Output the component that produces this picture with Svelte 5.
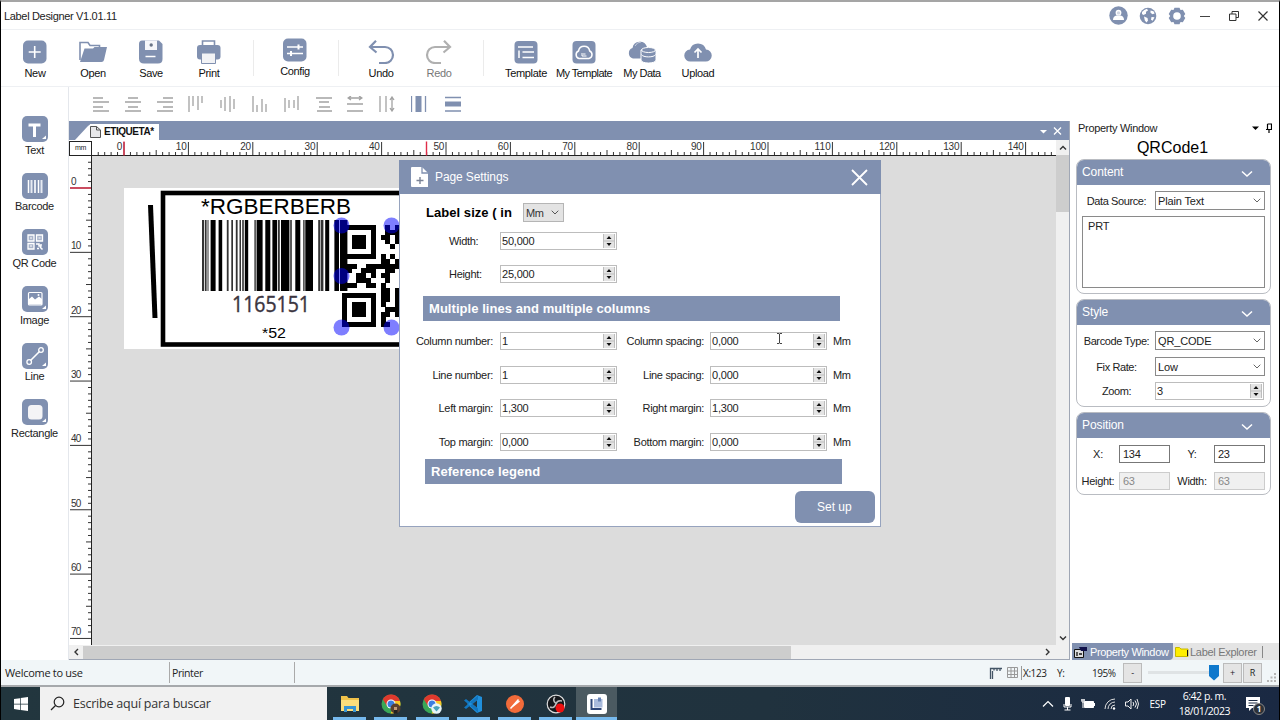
<script lang="ts">
	// Label designer main window with the page settings dialog open.
	type Tool = { id: string; label: string; dim?: boolean };

	const toolGroups: Tool[][] = [
		[
			{ id: 'new', label: 'New' },
			{ id: 'open', label: 'Open' },
			{ id: 'save', label: 'Save' },
			{ id: 'print', label: 'Print' }
		],
		[{ id: 'config', label: 'Config' }],
		[
			{ id: 'undo', label: 'Undo' },
			{ id: 'redo', label: 'Redo', dim: true }
		],
		[
			{ id: 'template', label: 'Template' },
			{ id: 'mytemplate', label: 'My Template' },
			{ id: 'mydata', label: 'My Data' },
			{ id: 'upload', label: 'Upload' }
		]
	];

	const objects = ['Text', 'Barcode', 'QR Code', 'Image', 'Line', 'Rectangle'];

	// 16x16 stroke paths of the alignment bar
	const aligns = [
		'M0 2h10M0 6h16M0 11h10M0 15h16',
		'M3 2h10M0 6h16M3 11h10M0 15h16',
		'M6 2h10M0 6h16M6 11h10M0 15h16',
		'M1 0v16M5 0v10M10 0v14M14 0v7',
		'M1 4v8M5 1v14M10 0v16M14 3v10',
		'M1 0v16M5 9v7M10 3v13M14 8v8',
		'M1 2v14M5 4v8M10 4v8M14 0v14',
		'M0 2h16M3 6h10M3 11h11M1 15h15',
		'M2 2h12M4 0l-3 2 3 2M12 0l3 2-3 2M0 8h16M0 15h16',
		'M1 0v16M7 0v16M13 2v12M11 4l2-3 2 3M11 12l2 3 2-3'
	];

	const MM = 6.44;
	const hTicks = Array.from({ length: 150 }, (_, i) => i - 4);
	const vTicks = Array.from({ length: 75 }, (_, i) => i - 4);

	// [x, width] of each bar, relative to the sheet
	const bars = [
		[78, 2], [80.8, 1.8], [83.5, 1], [86.6, 5], [94.6, 3.6], [102.8, 1.8], [107.3, 1.7],
		[111.8, 1.8], [115.5, 1.5], [118.2, 1.6], [120.8, 3.4], [130.4, 1.4], [132.6, 6], [141.3, 5],
		[148.4, 4.6], [153.8, 2], [157, 8.4], [166.2, 1.6], [171.3, 5], [179.2, 1.4], [181.3, 7.7],
		[194.2, 2.2], [197, 2.4], [201.2, 4], [210.4, 4.6], [216, 7.4]
	];

	const qr = [
		'1111111..1.1.11111111',
		'1.....1..111.1.....1.',
		'1.111.1.11.1.1.111.1.',
		'1.111.1..1.1.1.111.1.',
		'1.111.1...1..1.111.1.',
		'1.....1......1.....1.',
		'1111111.1.1.111111111',
		'........11.1.........',
		'111..1111111.11.1.11.',
		'.1..111..11..11.1..1.',
		'...11.1.11...1..11..1',
		'1..111...1..1..1.1..1',
		'.11..11.1...11.1..11.',
		'........11.11.1..1.1.',
		'1111111.11.1..1.11..1',
		'1.....1.11.11.1.1..1.',
		'1.111.1.1..1..11..1.1',
		'1.111.1..111.1.1.11..',
		'1.111.1.11.11.1..1.1.',
		'1.....1.1...1..1.11..',
		'1111111.11..1.1..1.1.'
	];

	const rows = [
		['Column number:', '1', 'Column spacing:', '0,000'],
		['Line number:', '1', 'Line spacing:', '0,000'],
		['Left margin:', '1,300', 'Right margin:', '1,300'],
		['Top margin:', '0,000', 'Bottom margin:', '0,000']
	];

	const apps = ['files', 'chrome1', 'chrome2', 'code', 'postman', 'obs', 'label'];
</script>

{#snippet toolIcon(id: string)}
	<svg class="ticon" viewBox="0 0 28 24" fill="none">
		{#if id === 'new'}
			<rect x="2" y="0.5" width="23.5" height="23" rx="5" fill="#8090b0" />
			<path d="M13.7 6v12M7.7 12h12" stroke="#fff" stroke-width="1.6" />
		{:else if id === 'open'}
			<path d="M1 20V2.5h8l2 3h9.5v3.5" stroke="#8090b0" stroke-width="1.6" />
			<path d="M1 22L5.5 8.5H14l1.5-1.5H28L25 20q-.5 2-2.5 2z" fill="#8090b0" />
		{:else if id === 'save'}
			<path d="M5 .5h17l3.5 3.5v15q0 4.5-4.5 4.5H7q-5 0-5-5V4q0-3.5 3-3.5z" fill="#8090b0" />
			<path d="M8 .5h12v9.5H8z" fill="#f6f7fa" />
			<circle cx="14.2" cy="5" r="1.7" fill="#6a7588" />
			<path d="M8.5 16.5h10" stroke="#fff" stroke-width="1.5" />
		{:else if id === 'print'}
			<path d="M7.500 5V1h12v4" stroke="#8090b0" stroke-width="1.6" />
			<rect x="2" y="5" width="23.5" height="14.5" rx="3" fill="#8090b0" />
			<path d="M6.5 13h14v10.5h-14z" fill="#f1f2f5" stroke="#8090b0" />
		{:else if id === 'config'}
			<rect x="2" y=".5" width="23.5" height="23" rx="5" fill="#8090b0" />
			<path d="M6 9h16M6 15.5h16" stroke="#fff" stroke-width="1.4" />
			<path d="M17.5 6.5v5M10 13v5" stroke="#fff" stroke-width="2" />
		{:else if id === 'undo'}
			<path d="M9 .8L3 7l6.5 5.5M3.5 7H18a8 8 0 0 1 0 16H12" stroke="#8090b0" stroke-width="2.2" />
		{:else if id === 'redo'}
			<path d="M19 .8L25 7l-6.5 5.5M24.5 7H10a8 8 0 0 0 0 16h6" stroke="#b0b0b0" stroke-width="2.2" />
		{:else if id === 'template'}
			<rect x="2.5" y="1" width="23" height="22.5" rx="4" fill="#8090b0" />
			<path d="M6 7h15M10.5 12h11.5M10.5 17.5h11.5M7 10.5v7.5" stroke="#fff" stroke-width="1.5" />
		{:else if id === 'mytemplate'}
			<rect x="2.5" y="1" width="23" height="22.5" rx="4" fill="#8090b0" />
			<path
				d="M9 18.5a4 4 0 0 1-.5-7.5 5.700 5.700 0 0 1 11.200 0 4 4 0 0 1-.7 7.5z"
				stroke="#fff"
				stroke-width="1.5"
			/>
			<path d="M12 13v3h4.5M13 14h2.5" stroke="#fff" />
		{:else if id === 'mydata'}
			<path d="M5 18.5a5.500 5.500 0 0 1-.5-10.500 7.500 7.500 0 0 1 14.500-1 5.500 5.500 0 0 1 1 11.500z" fill="#8090b0" />
			<path d="M7 6q2-4 6-4" stroke="#c6cedd" />
			<path d="M13 10v10c0 4 15 4 15 0V10z" fill="#8090b0" stroke="#fff" />
			<ellipse cx="20.5" cy="10" rx="7" ry="2.5" fill="#8090b0" stroke="#fff" />
			<path d="M13.500 14.500c1 3.200 13 3.200 14 0" stroke="#fff" />
		{:else}
			<path d="M6.500 21.500a6 6 0 0 1-.5-12 8.300 8.300 0 0 1 16 0 6 6 0 0 1-.5 12z" fill="#8090b0" />
			<path d="M14 18V9.500M10.500 12.500L14 9l3.500 3.500" stroke="#fff" stroke-width="1.7" />
		{/if}
	</svg>
{/snippet}

{#snippet objectIcon(id: string)}
	<svg class="oicon" viewBox="0 0 26 26" fill="none">
		<rect width="26" height="26" rx="5" fill="#8090b0" />
		{#if id === 'Text'}
			<path d="M6.500 9h12M12.500 9v12" stroke="#fff" stroke-width="3" />
		{:else if id === 'Barcode'}
			<path d="M6.500 7v13M16.500 7v13" stroke="#fff" stroke-width="1.5" />
			<path d="M9.500 7v13M13 7v13M19.500 7v13" stroke="#e6eaf2" stroke-width="2" />
		{:else if id === 'QR Code'}
			<path d="M6 6h6v6H6zM14.500 6h6v6h-6zM6 14.500h6v5.500H6z" stroke="#fff" stroke-width="1.3" fill="#aab5cb" />
			<path d="M14 15h3v2h2v-2M15 19.500h2M18 18l2.500 2.500" stroke="#fff" stroke-width="1.5" />
			<path d="M8 9h2M16.500 9h2M8 17h2" stroke="#fff" />
		{:else if id === 'Image'}
			<rect x="6.5" y="6.5" width="13.5" height="12.5" rx="1" stroke="#fff" stroke-width="1.2" />
			<path d="M7 13l3-2.500 3 3 4-3 3 2.500v5.500H7z" fill="#fff" />
			<circle cx="16.5" cy="9" r="1" fill="#fff" />
		{:else if id === 'Line'}
			<path d="M8.500 17.500L17.500 8.500" stroke="#fff" stroke-width="1.6" />
			<circle cx="7.2" cy="19" r="2.3" stroke="#fff" stroke-width="1.3" />
			<circle cx="19" cy="7" r="2.3" stroke="#fff" stroke-width="1.3" />
		{:else}
			<rect x="6" y="6" width="14.5" height="14.5" rx="3.5" fill="#f4f4f6" />
		{/if}
		{#if id === 'Text' || id === 'Image' || id === 'Line' || id === 'Rectangle'}
			<path d="M24 19.500v3.500h-4z" fill="#fff" />
		{/if}
	</svg>
{/snippet}

{#snippet spin(value: string)}
	<span class="spin">
		<span class="val">{value}</span>
		<svg class="arrows" viewBox="0 0 12 14">
			<path d="M0 0h12v14H0z" fill="#e4e4e4" />
			<path d="M0 7h12M.5 0v14M11.500 0v14" stroke="#bdbdbd" />
			<path d="M3.500 5L6 2l2.500 3zM3.500 9h5L6 12z" fill="#111" />
		</svg>
	</span>
{/snippet}

{#snippet select(value: string)}
	<span class="select">
		{value}
		<svg width="8" height="5" viewBox="0 0 8 5"><path d="M.7.7L4 4 7.300.7" fill="none" stroke="#666" /></svg>
	</span>
{/snippet}

{#snippet groupHead(title: string)}
	<header>
		{title}
		<svg width="12" height="8" viewBox="0 0 12 8"><path d="M1 1.500l5 4.500 5-4.500" fill="none" stroke="#fff" stroke-width="1.5" /></svg>
	</header>
{/snippet}

<div class="window">
	<div class="titlebar">
		<span class="name">Label Designer V1.01.11</span>
		<svg width="19" height="19" viewBox="0 0 19 19">
			<circle cx="9.5" cy="9.5" r="9.2" fill="#8090b0" />
			<circle cx="9.5" cy="6.7" r="2.9" fill="#fff" />
			<path d="M4 14q0-4 3.500-4.500h4Q15 10 15 14z" fill="#fff" />
			<circle cx="9.5" cy="6.9" r="1.7" fill="#8090b0" opacity="0.35" />
		</svg>
		<svg width="18" height="18" viewBox="0 0 18 18">
			<circle cx="9" cy="9" r="8.3" fill="#8090b0" />
			<path d="M3 5q2-2.500 5-3.300l1 1.800-2 1.200v2L4.500 8 3 7zM11.500 3.500l3 .8 1.200 2.200-2.200.8-2-1.600zM5 9.500l3.500 1.500.5 2.500-1.500 2-1.700-2zM12.500 10l3 .3-1.800 3.500-1.700-1z" fill="#fff" />
		</svg>
		<svg width="18" height="18" viewBox="0 0 18 18">
			<path d="M6.500.8h5l1 2.200 2.300-.3 2.500 4.300L15.800 9l1.500 2-2.500 4.300-2.300-.3-1 2.200h-5l-1-2.200-2.300.3L.7 11l1.500-2L.7 7l2.500-4.300 2.300.3z" fill="#8090b0" />
			<circle cx="9" cy="9" r="3.8" fill="#fff" />
		</svg>
		<svg width="10" height="10" viewBox="0 0 10 10"><path d="M0 5.500h10" stroke="#444" /></svg>
		<svg width="10" height="10" viewBox="0 0 10 10"><path d="M.5 3h6.500v6.500H.5zM3 3V.5h6.500v6H7" fill="none" stroke="#333" /></svg>
		<svg width="10" height="10" viewBox="0 0 10 10"><path d="M.5.5l9 9M9.500.5l-9 9" stroke="#333" stroke-width="1.2" /></svg>
	</div>

	<div class="toolbar">
		{#each toolGroups as group, g}
			{#if g > 0}<i class="sep"></i>{/if}
			{#each group as tool}
				<div class="tool {tool.id}" class:dim={tool.dim}>
					{@render toolIcon(tool.id)}
					<span>{tool.label}</span>
				</div>
			{/each}
		{/each}
	</div>

	<div class="main">
		<nav class="objects">
			{#each objects as name}
				<div class="object">
					{@render objectIcon(name)}
					<span>{name}</span>
				</div>
			{/each}
		</nav>

		<div class="center">
			<div class="aligns">
				{#each aligns as d}
					<svg width="16" height="16" viewBox="0 0 16 16"><path {d} fill="none" stroke="#a2a2a2" stroke-width="1.3" /></svg>
				{/each}
				<svg width="16" height="16" viewBox="0 0 16 16">
					<path d="M.5 0v16M14.500 0v16" stroke="#8090b0" stroke-width="1.3" /><path d="M4.500 0h6v16h-6z" fill="#8090b0" />
				</svg>
				<svg class="last" width="16" height="16" viewBox="0 0 16 16">
					<path d="M0 1.500h16M0 15h16" stroke="#8090b0" stroke-width="1.3" /><path d="M0 5.500h16v5H0z" fill="#8090b0" />
				</svg>
			</div>

			<div class="doc">
				<div class="tabs">
					<svg width="21" height="16" viewBox="0 0 21 16"><path d="M0 16L13 2q2-2 4-2h4v16z" fill="#fff" /></svg>
					<div class="tab">
						<svg width="11" height="12" viewBox="0 0 11 12"><path d="M.5.5h6l4 3.500v7.500H.5z" fill="#e8e8ea" stroke="#555" /><path d="M6.500.5V4h4" fill="none" stroke="#555" /></svg>
						<b>ETIQUETA*</b>
					</div>
					<svg class="tabctl" width="22" height="10" viewBox="0 0 22 10">
						<path d="M0 4h7L3.500 7.500z" fill="#fff" />
						<path d="M14 1.500l7 7M21 1.500l-7 7" stroke="#fff" stroke-width="1.3" />
					</svg>
				</div>

				<div class="sheet">
					<div class="work">
						<div class="toprow">
							<div class="unit">mm</div>
							<svg class="ruler" width="964" height="16" viewBox="92 140 964 16">
								{#each hTicks as t}
									{@const x = 124 + t * MM}
									{@const h = t % 10 === 0 ? 13 : t % 5 === 0 ? 5 : 3}
									<path d="M{x} {155 - h}v{h}" stroke="#333" />
									{#if t % 10 === 0}
										<text {x} dx="-2" y="150" text-anchor="end" textLength={String(t).length * 5.3}>{t}</text>
									{/if}
								{/each}
								<path d="M92 155.500h964" stroke="#222" />
								<path d="M124 141.500v14M426.500 141.500v14" stroke="#e02c48" stroke-width="1.4" />
							</svg>
						</div>
						<div class="canvasrow">
							<svg class="ruler" width="23" height="489" viewBox="69 156 23 489">
								{#each vTicks as t}
									{@const y = 188 + t * 6.435}
									{@const w = t % 10 === 0 ? 21 : t % 5 === 0 ? 5 : 3}
									<path d="M{91 - w} {y}h{w}" stroke="#333" />
									{#if t % 10 === 0}
										<text x="71" y={y - 3} textLength={String(t).length * 5}>{t}</text>
									{/if}
								{/each}
								<path d="M91.500 156v489" stroke="#222" />
								<path d="M70 188h21" stroke="#e02c48" stroke-width="1.4" />
							</svg>
							<div class="canvas">
								<svg width="324" height="161" viewBox="0 0 324 161">
									<path d="M0 0h324v161H0z" fill="#fff" />
									<path d="M26.500 17L31 130" stroke="#000" stroke-width="5" />
									<rect x="39" y="5" width="276" height="151.5" fill="none" stroke="#000" stroke-width="4.6" />
									<text class="product" x="77" y="26" textLength="150" lengthAdjust="spacingAndGlyphs">*RGBERBERB</text>
									{#each bars as [x, w]}
										<rect {x} y="32" width={w} height="71" fill={w < 2.5 ? '#333' : '#000'} />
									{/each}
									<text class="code" x="108" y="124" textLength="78" lengthAdjust="spacingAndGlyphs">1165151</text>
									<text class="price" x="138" y="150" textLength="24" lengthAdjust="spacingAndGlyphs">*52</text>
									<g transform="translate(218 37)" shape-rendering="crispEdges">
										{#each qr as line, r}
											{#each line as m, c}
												{#if m === '1'}
													<rect x={c * 4.83} y={r * 4.83} width="4.9" height="4.9" />
												{/if}
											{/each}
										{/each}
									</g>
									<g fill="#0000ff" opacity="0.5">
										<circle cx="217.5" cy="37.5" r="8" />
										<circle cx="267.5" cy="37.5" r="8" />
										<circle cx="217.5" cy="88" r="8" />
										<circle cx="217.5" cy="139.5" r="8" />
										<circle cx="267.5" cy="139.5" r="8" />
									</g>
								</svg>
							</div>
						</div>
					</div>
					<div class="vscroll">
						<svg width="8" height="14" viewBox="0 0 8 14"><path d="M1 9.500l3-3 3 3" fill="none" stroke="#333" stroke-width="1.4" /></svg>
						<div class="vthumb"></div>
						<svg width="8" height="14" viewBox="0 0 8 14"><path d="M1 5.500l3 3 3-3" fill="none" stroke="#333" stroke-width="1.4" /></svg>
					</div>
				</div>
				<div class="hscroll">
					<svg width="14" height="8" viewBox="0 0 14 8"><path d="M9 1L6 4l3 3" fill="none" stroke="#333" stroke-width="1.4" /></svg>
					<div class="hthumb"></div>
					<svg width="14" height="8" viewBox="0 0 14 8"><path d="M5 1l3 3-3 3" fill="none" stroke="#333" stroke-width="1.4" /></svg>
				</div>
			</div>
		</div>

		<aside class="props">
			<div class="phead">
				<span>Property Window</span>
				<svg width="20" height="10" viewBox="0 0 20 10">
					<path d="M0 3.500h7L3.500 7z" fill="#000" />
					<path d="M15.500 1h4v5M15.500 1v5M14 6.500h6M17 6.500V10" fill="none" stroke="#000" stroke-width="1.2" />
				</svg>
			</div>
			<h1>QRCode1</h1>
			<section class="content">
				{@render groupHead('Content')}
				<div class="prow"><span class="lbl">Data Source:</span>{@render select('Plain Text')}</div>
				<div class="area">PRT</div>
			</section>
			<section class="style">
				{@render groupHead('Style')}
				<div class="prow"><span class="lbl">Barcode Type:</span>{@render select('QR_CODE')}</div>
				<div class="prow"><span class="lbl">Fix Rate:</span>{@render select('Low')}</div>
				<div class="prow zoom"><span class="lbl">Zoom:</span>{@render spin('3')}</div>
			</section>
			<section class="position">
				{@render groupHead('Position')}
				<div class="pos">
					<span>X:</span><span class="box">134</span><span>Y:</span><span class="box">23</span>
					<span>Height:</span><span class="box off">63</span><span>Width:</span><span class="box off">63</span>
				</div>
			</section>
			<div class="ptabs">
				<div class="ptab on">
					<svg width="13" height="12" viewBox="0 0 13 12"><path d="M.5 3.500h9v8h-9z" fill="#ddd" stroke="#111" /><path d="M5 1h8v4H7z" fill="#10104a" /><path d="M3 6v4M5 8h3" stroke="#111" stroke-width="1.3" /></svg>
					<span>Property Window</span>
				</div>
				<div class="ptab">
					<svg width="14" height="10" viewBox="0 0 14 10"><path d="M.5 2V.5h4L6 2h7v7.500H.5z" fill="#ffee00" stroke="#c8b800" /><path d="M12.500 3v6" stroke="#111" /></svg>
					<span>Label Explorer</span>
				</div>
			</div>
		</aside>
	</div>

	<div class="status">
		<span class="cell welcome">Welcome to use</span>
		<span class="cell printer">Printer</span>
		<svg width="13" height="12" viewBox="0 0 13 12"><path d="M1.500 12V1.500H13M3.500 4v8M5 3.500V1M8 4V1M11 4V1" fill="none" stroke="#456" stroke-width="1.3" /></svg>
		<svg class="grid" width="12" height="12" viewBox="0 0 12 12"><path d="M.5.5h10v10H.5zM4 .5v10M7.500.5v10M.5 4h10M.5 7.500h10" fill="none" stroke="#999" /></svg>
		<span class="xy">X:123</span>
		<span class="yy">Y:</span>
		<span class="pct">195%</span>
		<span class="btn">-</span>
		<div class="slider"><i></i><svg width="10" height="16" viewBox="0 0 10 16"><path d="M0 0h10v11l-5 4.500L0 11z" fill="#0f78cc" /></svg></div>
		<span class="btn">+</span>
		<span class="btn">R</span>
		<svg class="grip" width="9" height="9" viewBox="0 0 9 9"><path d="M7 0h2v2H7zM3.500 3.500h2v2h-2zM7 3.500h2v2H7zM0 7h2v2H0zM3.500 7h2v2h-2zM7 7h2v2H7z" fill="#b5b5b5" /></svg>
	</div>

	<div class="taskbar">
		<div class="start">
			<svg width="14" height="14" viewBox="0 0 14 14"><path d="M0 2l6-.8v5.500H0zM6.700 1.100L14 0v6.700H6.700zM0 7.400h6v5.500L0 12zM6.700 7.400H14V14l-7.300-1z" fill="#fff" /></svg>
		</div>
		<div class="search">
			<svg width="15" height="15" viewBox="0 0 15 15"><circle cx="9" cy="6" r="4.8" fill="none" stroke="#222" stroke-width="1.2" /><path d="M5.500 9.500L1 14" stroke="#222" stroke-width="1.3" /></svg>
			Escribe aquí para buscar
		</div>
		{#each apps as app}
			<div class="app" class:active={app === 'label'}>
				<svg width="20" height="20" viewBox="0 0 20 20">
					{#if app === 'files'}
						<path d="M1 2h6l1.500 2H19v13H1z" fill="#f0c24a" />
						<path d="M1 6h18v11H1z" fill="#ffdf7c" />
						<path d="M4 18v-6h12v6h-3v-3H7v3z" fill="#3b96d4" />
					{:else if app === 'chrome1' || app === 'chrome2'}
						<circle cx="10" cy="10" r="9.5" fill="#3aa757" />
						<path d="M1.800 5.300A9.500 9.500 0 0 1 19 7H10L6 12z" fill="#e0392d" />
						<path d="M19 7a9.500 9.500 0 0 1-9.500 12.500L14 11l-1-4z" fill="#f9c825" />
						<circle cx="10" cy="10" r="4.5" fill="#fff" />
						<circle cx="10" cy="10" r="3.5" fill="#3c7de0" />
						{#if app === 'chrome1'}
							<circle cx="14.5" cy="14.5" r="5" fill="#5b4030" />
							<path d="M13 13h3v6h-3z" fill="#c69a74" /><path d="M13 16h3.500v3.500H13z" fill="#222" />
						{:else}
							<circle cx="14.5" cy="14.5" r="5.2" fill="#e6f3f7" />
							<path d="M11 13.500q3.500-3 7 0l-3.500 4z" fill="#48a3bb" />
						{/if}
					{:else if app === 'code'}
						<path d="M14 1l5 2v14l-5 2L4 10z" fill="#2090dc" />
						<path d="M1 6.500L3 5l12 9.500v4zM1 13.500L3 15 15 5.500v-4z" fill="#1276bf" />
						<path d="M14 6.500v7L9.500 10z" fill="#22343f" />
					{:else if app === 'postman'}
						<circle cx="10" cy="10" r="9" fill="#f26b3a" />
						<path d="M5.500 14.500l8-9M7 13l7.500-6" stroke="#fff" stroke-width="1.5" />
					{:else if app === 'obs'}
						<circle cx="10" cy="10" r="8.8" fill="#15181c" stroke="#ddd" stroke-width="1.2" />
						<path d="M9 3q-3 3 1 6.500M4 13q4 2 6-3M16 7q-5-1-6 3" stroke="#bbb" stroke-width="1.6" fill="none" />
						<circle cx="14" cy="14" r="4.5" fill="#ee1010" />
					{:else}
						<rect width="20" height="20" rx="3" fill="#fff" />
						<path d="M4.500 5v10h10" stroke="#2d4678" stroke-width="2" fill="none" />
						<path d="M7 5h8.500v8.500H7z" fill="#a9bbdc" /><path d="M11 3.500h3v4h-3z" fill="#6682b4" />
					{/if}
				</svg>
			</div>
		{/each}
		<div class="tray">
			<svg width="12" height="7" viewBox="0 0 12 7"><path d="M1 6.500l5-5 5 5" fill="none" stroke="#fff" stroke-width="1.2" /></svg>
			<svg width="9" height="14" viewBox="0 0 9 14"><rect x="2" width="5" height="9" rx="1" fill="#fff" /><path d="M1 7v3h7V7M4.500 10v3M1.500 13h6" fill="none" stroke="#fff" /></svg>
			<svg width="14" height="10" viewBox="0 0 14 10"><path d="M3.500 2.500h9v6h-9z" fill="#fff" stroke="#fff" /><path d="M13.500 4v3M0 1h4M1 0v3h2V0M2 3v6" stroke="#fff" fill="none" /></svg>
			<svg width="12" height="12" viewBox="0 0 12 12"><path d="M1 11A10 10 0 0 1 11 1M4 11a7 7 0 0 1 7-7M7 11a4 4 0 0 1 4-4" fill="none" stroke="#ddd" /><circle cx="10" cy="10.5" r="1.2" fill="#fff" /></svg>
			<svg width="14" height="12" viewBox="0 0 14 12"><path d="M.5 4h2.500l3-3v10L3 8H.5zM8 4q1.500 2 0 4M10 2.500q3 3.500 0 7M12 1q3 5 0 10" fill="none" stroke="#eee" /></svg>
			<span class="lang">ESP</span>
			<span class="clock">6:42 p. m.<br />18/01/2023</span>
			<div class="notes">
				<svg width="14" height="14" viewBox="0 0 14 14"><path d="M0 0h14v11H6l-3 3v-3H0z" fill="#fff" /><path d="M2.500 3.500h9M2.500 6h9M2.500 8.500h5" stroke="#1c2c44" /></svg>
				<b>1</b>
			</div>
		</div>
	</div>

	<div class="dialog">
		<div class="dhead">
			<svg width="17" height="20" viewBox="0 0 17 20"><path d="M1 0h10l6 6v14H1q-1 0-1-1V1q0-1 1-1z" fill="#fff" /><path d="M11 0v6h6" fill="none" stroke="#8090b0" stroke-width="1.3" /><path d="M9 10v7M5.500 13.500h7" stroke="#7b8396" stroke-width="1.4" /></svg>
			<span>Page Settings</span>
			<svg width="17" height="17" viewBox="0 0 17 17"><path d="M1 1l15 15M16 1L1 16" stroke="#fff" stroke-width="1.8" /></svg>
		</div>
		<div class="size">
			<b>Label size ( in</b>
			<span class="unitsel">Mm <svg width="8" height="5" viewBox="0 0 8 5"><path d="M.7.7L4 4 7.300.7" fill="none" stroke="#555" /></svg></span>
		</div>
		<div class="drow first"><span class="dl wide">Width:</span>{@render spin('50,000')}</div>
		<div class="drow second"><span class="dl wide">Height:</span>{@render spin('25,000')}</div>
		<h2>Multiple lines and multiple columns</h2>
		<div class="rows">
			{#each rows as [l, lv, r, rv]}
				<div class="drow">
					<span class="dl">{l}</span>{@render spin(lv)}
					<span class="dl right">{r}</span>{@render spin(rv)}
					<span class="mm">Mm</span>
				</div>
			{/each}
		</div>
		<h2 class="legend">Reference legend</h2>
		<div class="setup">Set up</div>
	</div>

	<svg class="caret" width="7" height="11" viewBox="0 0 7 11"><path d="M1 .5h2l.5.5.5-.5h2M3.500 1v9M1 10.500h2l.5-.5.5.5h2" fill="none" stroke="#444" /></svg>
</div>

<style>
	:global(body) {
		margin: 0;
		overflow: hidden;
	}
	.window {
		--blue: #8090b0;
		position: relative;
		box-sizing: border-box;
		width: 1280px;
		height: 720px;
		display: flex;
		flex-direction: column;
		border: solid #000;
		border-width: 0 1px;
		border-top: 2px solid #a5a5a5;
		background: #fff;
		color: #222;
		font: 11px/14px 'Liberation Sans', Arial, sans-serif;
		letter-spacing: -0.3px;
		white-space: nowrap;
	}
	.window :global(*) {
		box-sizing: border-box;
	}
	svg {
		display: block;
		flex: none;
	}

	.titlebar {
		height: 28px;
		display: flex;
		align-items: center;
		padding: 0 11px 0 3px;
		border-bottom: 1px solid #eef0f3;
		gap: 19px;
	}
	.titlebar svg:nth-of-type(1),
	.titlebar svg:nth-of-type(2) {
		margin-right: -8px;
	}
	.titlebar svg:nth-of-type(3) {
		margin-right: -5px;
	}
	.titlebar .name {
		margin-right: auto;
		letter-spacing: -0.33px;
	}

	.toolbar {
		height: 57px;
		display: flex;
		align-items: flex-start;
		padding: 10px 0 0 5px;
		border-bottom: 1px solid #eef0f3;
	}
	.tool {
		width: 58px;
		display: flex;
		flex-direction: column;
		align-items: center;
		gap: 2px;
		letter-spacing: -0.35px;
		color: #111;
	}
	.tool.config {
		width: 56px;
		margin-top: -2px;
	}
	.tool.mytemplate {
		letter-spacing: -0.55px;
	}
	.tool.mydata {
		letter-spacing: -0.5px;
	}
	.tool.upload {
		width: 54px;
	}
	.tool.dim {
		color: #777;
	}
	.ticon {
		width: 28px;
		height: 24px;
	}
	.sep {
		width: 1px;
		height: 36px;
		margin: 0 13px 0 15px;
		background: #ebebeb;
	}

	.main {
		flex: 1;
		display: flex;
		min-height: 0;
	}
	.objects {
		width: 67px;
		padding-top: 29px;
	}
	.object {
		height: 56.7px;
		display: flex;
		flex-direction: column;
		align-items: center;
		gap: 0.6px;
	}
	.oicon {
		width: 26px;
		height: 26px;
		margin-left: 1px;
	}
	.center {
		width: 1002px;
		display: flex;
		flex-direction: column;
		border-left: 1px solid #e4e7ec;
	}
	.aligns {
		height: 34px;
		display: flex;
		align-items: center;
		gap: 15.8px;
		padding-left: 24px;
	}
	.aligns .last {
		margin-left: 2.5px;
	}
	.doc {
		flex: 1;
		display: flex;
		flex-direction: column;
		border: solid #a0a7b5;
		border-width: 0 1px 1px 0;
	}
	.tabs {
		height: 19px;
		display: flex;
		align-items: flex-end;
		padding: 0 7px 0 6px;
		background: var(--blue);
	}
	.tab {
		height: 16px;
		width: 69px;
		display: flex;
		align-items: center;
		gap: 3px;
		margin-left: -6px;
		background: #fff;
		color: #111;
		font-size: 10px;
		letter-spacing: -0.45px;
	}
	.tabctl {
		margin: 0 0 4px auto;
	}
	.sheet {
		flex: 1;
		display: flex;
		min-height: 0;
	}
	.work {
		width: 987px;
	}
	.toprow,
	.canvasrow {
		display: flex;
	}
	.unit {
		width: 23px;
		height: 15px;
		margin-top: 1px;
		border: 1px solid #222;
		font-size: 7px;
		line-height: 12px;
		text-align: center;
	}
	.ruler text {
		font-size: 10px;
		fill: #333;
	}
	.canvas {
		flex: 1;
		height: 489px;
		padding: 32px 0 0 32px;
		background: #dcdcdc;
	}
	.product,
	.price {
		fill: #000;
		font-size: 21.5px;
		letter-spacing: 0;
	}
	.price {
		font-size: 15px;
	}
	.code {
		fill: #3b3540;
		stroke: #3b3540;
		stroke-width: 0.4px;
		font: 21px 'Open Sans', sans-serif;
		letter-spacing: 0;
	}
	.vscroll {
		width: 14px;
		display: flex;
		flex-direction: column;
		align-items: center;
		background: #f0f0f0;
	}
	.vthumb {
		width: 13px;
		height: 57px;
		margin: 1px 0 auto;
		background: #cdcdcd;
	}
	.hscroll {
		height: 14px;
		display: flex;
		align-items: center;
		padding-right: 14px;
		background: #f0f0f0;
	}
	.hthumb {
		width: 708px;
		height: 13px;
		margin-right: auto;
		background: #cdcdcd;
	}

	.props {
		width: 209px;
		display: flex;
		flex-direction: column;
		padding: 34px 0 0 6px;
	}
	.phead {
		display: flex;
		justify-content: space-between;
		align-items: center;
		padding: 0 7px 0 2px;
	}
	h1 {
		margin: 4px 10px 2px 0;
		font: 16px/18px 'Liberation Sans', Arial, sans-serif;
		letter-spacing: 0;
		text-align: center;
		color: #000;
	}
	section {
		width: 195px;
		border: 1px solid #b9bcc2;
		border-radius: 8px;
		overflow: hidden;
		margin-bottom: 5px;
	}
	section.content {
		height: 135px;
	}
	section.style {
		height: 108px;
	}
	section.position {
		height: 83px;
	}
	header {
		height: 26px;
		display: flex;
		align-items: center;
		justify-content: space-between;
		margin: -1px -1px 0;
		padding: 0 18px 0 6px;
		background: var(--blue);
		color: #fff;
		font-size: 12px;
		letter-spacing: -0.1px;
	}
	header svg {
		margin-top: 4px;
	}
	.prow {
		display: flex;
		align-items: center;
		margin-top: 7px;
	}
	header + .prow {
		margin-top: 6px;
	}
	.prow.zoom {
		margin-top: 6px;
	}
	.prow .lbl {
		width: 78px;
		padding-left: 1px;
		text-align: center;
		letter-spacing: -0.4px;
	}
	.select {
		width: 110px;
		height: 19px;
		display: flex;
		align-items: center;
		justify-content: space-between;
		padding: 0 3px 0 2px;
		border: 1px solid #8a8a8a;
		letter-spacing: -0.15px;
	}
	.area {
		width: 183px;
		height: 72px;
		margin: 6px 0 0 5px;
		padding: 2px 5px;
		border: 1px solid #8a8a8a;
		letter-spacing: -0.2px;
	}
	.prow .spin {
		width: 109px;
	}
	.pos {
		display: grid;
		grid-template-columns: 42px 51px 44px 51px;
		row-gap: 9px;
		padding-top: 7px;
		align-items: center;
		text-align: center;
	}
	.box {
		height: 18px;
		padding-left: 3px;
		border: 1px solid #777;
		line-height: 17px;
		text-align: left;
	}
	.box.off {
		border-color: #ccc;
		background: #f0f0f0;
		color: #888;
	}
	.spin {
		width: 117px;
		height: 18px;
		display: inline-flex;
		align-items: center;
		justify-content: space-between;
		padding-left: 1px;
		border: 1px solid #bdbdbd;
		background: #fff;
		letter-spacing: -0.2px;
	}
	.arrows {
		width: 12px;
		height: 14px;
		margin-right: 1px;
	}
	.ptabs {
		display: flex;
		align-items: center;
		height: 17px;
		margin: auto 0 0 -4px;
		background: #e4e4e4;
	}
	.ptab {
		height: 17px;
		display: flex;
		align-items: center;
		gap: 3px;
		padding-left: 2px;
		color: #777;
		width: 90px;
		letter-spacing: -0.35px;
	}
	.ptab:last-child {
		height: 12px;
		gap: 1px;
		border-right: 1px solid #888;
		letter-spacing: -0.3px;
	}
	.ptab.on {
		width: 101px;
		border-radius: 0 0 4px 0;
		background: var(--blue);
		color: #fff;
	}

	.status {
		height: 27px;
		display: flex;
		align-items: center;
		border-bottom: 2px solid #a6a9ac;
		background: #f1f6f8;
		font-family: 'Open Sans', sans-serif;
	}
	.cell {
		height: 21px;
		padding-left: 2px;
		border-right: 1px solid #aaa;
		line-height: 22px;
	}
	.welcome {
		width: 169px;
		padding-left: 4px;
	}
	.printer {
		width: 125px;
		margin-right: 694px;
		font-size: 10.5px;
		letter-spacing: -0.4px;
	}
	.status .grid {
		margin-left: 5px;
	}
	.xy {
		margin-left: 2px;
		padding-left: 1px;
		border-left: 1px solid #999;
		width: 36px;
		font-size: 10px;
		letter-spacing: -0.4px;
	}
	.yy {
		width: 35px;
		font-size: 10px;
	}
	.pct {
		width: 31px;
		font-size: 10px;
		letter-spacing: -0.5px;
	}
	.btn {
		width: 19px;
		height: 20px;
		border: 1px solid #bbb;
		background: #e4e4e4;
		font-size: 9px;
		line-height: 18px;
		text-align: center;
	}
	.btn + .btn {
		margin-left: 1px;
	}
	.slider {
		width: 81px;
		display: flex;
		align-items: center;
		padding: 0 4px 0 6px;
	}
	.slider i {
		flex: 1;
		height: 3px;
		background: #dfe3e5;
	}
	.grip {
		margin: 10px 0 0 5px;
	}

	.taskbar {
		height: 33px;
		display: flex;
		background: linear-gradient(90deg, #22363e, #20323e 60%, #1a2943);
		color: #fff;
		font-family: 'Open Sans', sans-serif;
	}
	.start {
		width: 39px;
		display: flex;
		align-items: center;
		justify-content: center;
	}
	.search {
		width: 287px;
		display: flex;
		align-items: center;
		gap: 8px;
		padding-left: 10px;
		background: #f1f1f1;
		color: #333;
		font-size: 12.5px;
		letter-spacing: -0.22px;
	}
	.app {
		width: 33px;
		display: flex;
		align-items: center;
		justify-content: center;
		margin-left: 8.3px;
		border-bottom: 3px solid #76b9ed;
		padding-top: 3px;
	}
	.search + .app {
		margin-left: 6px;
	}
	.app.active {
		width: 41px;
		margin-left: 4px;
		background: #4b5a61;
	}
	.tray {
		margin-left: auto;
		display: flex;
		align-items: center;
		gap: 9px;
		padding-right: 19px;
		font-size: 10.5px;
	}
	.lang {
		margin-left: 2px;
		font-size: 10px;
	}
	.clock {
		margin-left: 4px;
		text-align: center;
		line-height: 15px;
		letter-spacing: -0.45px;
	}
	.notes {
		position: relative;
		margin-left: 7px;
	}
	.notes b {
		position: absolute;
		left: 7px;
		top: 6px;
		width: 12px;
		height: 12px;
		border: 1px solid #888;
		border-radius: 50%;
		background: #2c3138;
		font-size: 8px;
		line-height: 10px;
		text-align: center;
	}

	.dialog {
		position: absolute;
		left: 398px;
		top: 158px;
		width: 482px;
		height: 367px;
		border: 1px solid #96a3be;
		background: #fff;
	}
	.dhead {
		height: 34px;
		display: flex;
		align-items: center;
		gap: 7px;
		margin: -1px -1px 0;
		padding: 0 13px 0 12px;
		background: var(--blue);
		color: #fff;
		font-size: 12px;
		line-height: 16px;
		letter-spacing: -0.1px;
	}
	.dhead span {
		flex: 1;
	}
	.size {
		height: 19px;
		display: flex;
		align-items: center;
		gap: 10px;
		margin: 9px 0 0 26px;
		color: #000;
	}
	.size b {
		width: 87px;
		font-size: 13px;
		line-height: 13px;
		letter-spacing: 0.05px;
	}
	.unitsel {
		width: 41px;
		height: 19px;
		display: flex;
		align-items: center;
		justify-content: space-between;
		padding: 0 4px 0 2px;
		border: 1px solid #b5b5b5;
		background: #e3e3e3;
		color: #333;
	}
	.drow {
		height: 18px;
		display: flex;
		align-items: center;
	}
	.first {
		margin-top: 10px;
	}
	.second {
		margin-top: 15px;
	}
	.dl {
		width: 93px;
		margin-right: 7px;
		text-align: right;
	}
	.dl.wide {
		padding-left: 49px;
		text-align: left;
	}
	.dl.right {
		width: 87px;
		margin-right: 6px;
	}
	.mm {
		margin-left: 6px;
	}
	h2 {
		width: 417px;
		height: 25px;
		margin: 13px 0 0 23px;
		padding-left: 6px;
		background: var(--blue);
		color: #fff;
		font: bold 13px/25px 'Liberation Sans', Arial, sans-serif;
		letter-spacing: 0.05px;
	}
	.rows {
		height: 119px;
		display: flex;
		flex-direction: column;
		justify-content: space-between;
		margin-top: 11px;
	}
	h2.legend {
		margin: 8px 0 0 25px;
	}
	.setup {
		width: 80px;
		height: 32px;
		margin: 7px 5px 0 auto;
		padding-left: 22px;
		border-radius: 6px;
		background: var(--blue);
		color: #fff;
		font-size: 12px;
		letter-spacing: 0;
		line-height: 32px;
	}
	.caret {
		position: absolute;
		left: 775px;
		top: 331px;
	}
</style>
